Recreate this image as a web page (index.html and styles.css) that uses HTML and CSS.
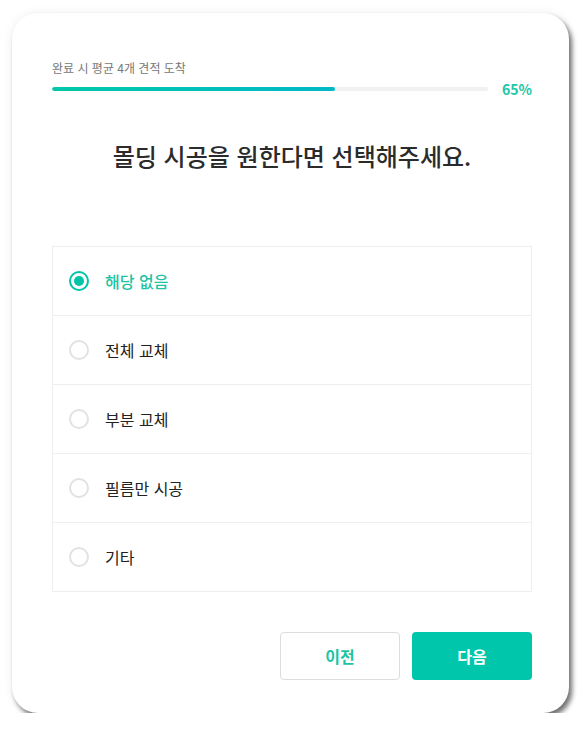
FILE: index.html
```html
<!DOCTYPE html>
<html lang="ko">
<head>
    <meta charset="UTF-8">
    <meta name="viewport" content="width=device-width, initial-scale=1.0">
    <title>몰딩 시공 견적</title>
    <link rel="stylesheet" href="styles.css">
</head>
<body>
    <div class="page">
        <div class="card">
            <div class="progress">
                <p class="progress-label">완료 시 평균 4개 견적 도착</p>
                <div class="progress-row">
                    <div class="progress-track">
                        <div class="progress-fill" style="width: 65%"></div>
                    </div>
                    <span class="progress-value">65%</span>
                </div>
            </div>

            <h1 class="question">몰딩 시공을 원한다면 선택해주세요.</h1>

            <ul class="options">
                <li class="option selected">
                    <span class="radio"></span>
                    <span class="option-text">해당 없음</span>
                </li>
                <li class="option">
                    <span class="radio"></span>
                    <span class="option-text">전체 교체</span>
                </li>
                <li class="option">
                    <span class="radio"></span>
                    <span class="option-text">부분 교체</span>
                </li>
                <li class="option">
                    <span class="radio"></span>
                    <span class="option-text">필름만 시공</span>
                </li>
                <li class="option">
                    <span class="radio"></span>
                    <span class="option-text">기타</span>
                </li>
            </ul>

            <div class="actions">
                <button class="btn btn-prev">이전</button>
                <button class="btn btn-next">다음</button>
            </div>
        </div>
    </div>
</body>
</html>
```

FILE: styles.css
```css
* {
    margin: 0;
    padding: 0;
    box-sizing: border-box;
    font-family: "Noto Sans CJK KR", "Noto Sans", sans-serif;
}

body {
    background-color: #fff;
    color: #333;
}

.page {
    padding: 13px 0 0 12px;
}

.card {
    width: 557px;
    height: 700px;
    background-color: #fff;
    border-radius: 26px;
    padding: 0 37px 0 40px;
    box-shadow: 3px 4px 5px rgba(0, 0, 0, 0.55), 0 0 12px rgba(0, 0, 0, 0.06);
    display: flex;
    flex-direction: column;
}

.progress {
    padding-top: 46px;
}

.progress-label {
    font-size: 12px;
    line-height: 18px;
    color: #777;
}

.progress-row {
    display: flex;
    align-items: center;
    margin-top: 2px;
}

.progress-track {
    flex: 1;
    height: 4px;
    background-color: #f1f1f1;
    border-radius: 2px;
    overflow: hidden;
}

.progress-fill {
    height: 100%;
    border-radius: 2px;
    background: linear-gradient(90deg, #00c7a9, #00b9c6);
}

.progress-value {
    width: 44px;
    text-align: right;
    font-size: 14px;
    font-weight: 700;
    color: #1cc6a6;
}

.question {
    margin-top: 40px;
    text-align: center;
    font-size: 24px;
    font-weight: 500;
    line-height: 34px;
    color: #2b2b2b;
}

.options {
    list-style: none;
    margin-top: 73px;
    border: 1px solid #eee;
}

.option {
    height: 69px;
    display: flex;
    align-items: center;
    padding-left: 16px;
    border-top: 1px solid #eee;
    font-size: 16px;
    color: #222;
    cursor: pointer;
}

.option:first-child {
    border-top: none;
    height: 68px;
}

.radio {
    width: 20px;
    height: 20px;
    border-radius: 50%;
    border: 2px solid #e2e2e2;
    margin-right: 16px;
    display: flex;
    align-items: center;
    justify-content: center;
}

.selected .radio {
    border-color: #00c4a8;
}

.selected .radio::after {
    content: "";
    width: 10px;
    height: 10px;
    border-radius: 50%;
    background-color: #00c4a8;
}

.selected .option-text {
    color: #1cc3a4;
    font-weight: 500;
}

.actions {
    display: flex;
    justify-content: flex-end;
    gap: 12px;
    margin-top: 40px;
}

.btn {
    width: 120px;
    height: 48px;
    border-radius: 4px;
    font-size: 16px;
    font-weight: 700;
    cursor: pointer;
}

.btn-prev {
    background-color: #fff;
    border: 1px solid #ddd;
    color: #1cc3a4;
}

.btn-next {
    background-color: #00c7ab;
    border: none;
    color: #fff;
}
```
